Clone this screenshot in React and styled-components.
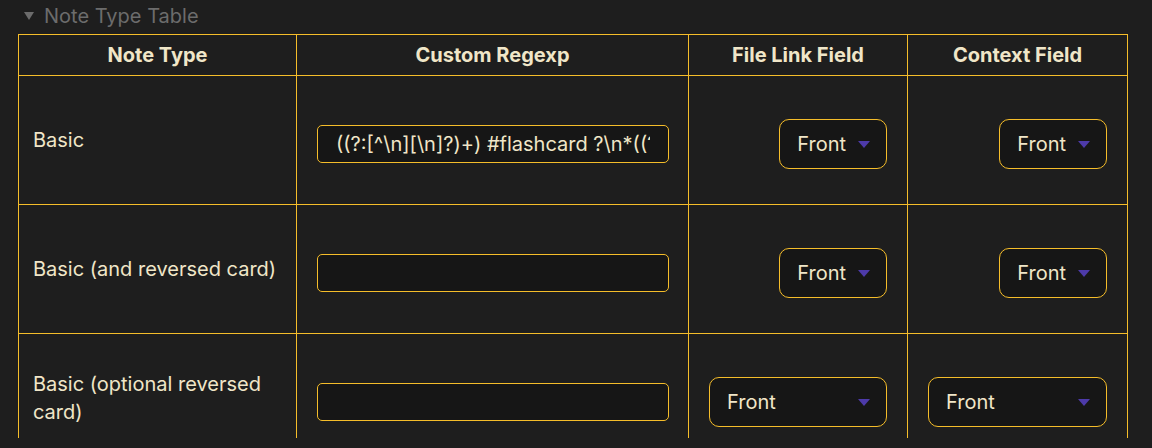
import React from "react";
import styled, { createGlobalStyle } from "styled-components";

const GOLD = "#f5bd2a";
const CREAM = "#f0e6c8";

const GlobalStyle = createGlobalStyle`
  html, body {
    margin: 0;
    padding: 0;
    background: #1e1e1e;
    font-family: Inter, "Noto Sans", sans-serif;
  }
`;

const Page = styled.div`
  padding: 4px 20px 0 18px;
  height: 448px;
  box-sizing: border-box;
`;

const Summary = styled.div`
  display: flex;
  align-items: center;
  gap: 10px;
  height: 24px;
  margin-bottom: 6px;
  padding-left: 6px;
  color: #6c6c6c;
  font-size: 20px;
`;

const Caret = styled.span`
  width: 0;
  height: 0;
  border-left: 5px solid transparent;
  border-right: 5px solid transparent;
  border-top: 8px solid #6c6c6c;
`;

const Scroller = styled.div`
  height: 404px;
  overflow: hidden;
`;

const Table = styled.table`
  width: 1109px;
  border-collapse: collapse;
  table-layout: fixed;
  color: ${CREAM};
  font-size: 20px;
`;

const Th = styled.th`
  height: 40px;
  border: 1px solid ${GOLD};
  font-weight: 700;
  text-align: center;
  padding: 0;
`;

const Td = styled.td`
  height: 128px;
  border: 1px solid ${GOLD};
  padding: ${(p) => (p.$name ? "0 2px 0 14px" : "0 20px 0 14px")};
  vertical-align: middle;
  text-align: ${(p) => p.$align || "left"};
  line-height: 28px;
`;

const TextInput = styled.input`
  box-sizing: border-box;
  display: block;
  height: 38px;
  margin: 8px 0 0 6px;
  width: calc(100% - 5px);
  padding: 0 18px;
  background: #161616;
  border: 1px solid ${GOLD};
  border-radius: 5px;
  color: ${CREAM};
  font-family: Inter, "Noto Sans", sans-serif;
  font-size: 20px;
  outline: none;
`;

const Dropdown = styled.div`
  box-sizing: border-box;
  display: inline-flex;
  align-items: center;
  justify-content: space-between;
  gap: 12px;
  height: 50px;
  margin-top: 8px;
  width: ${(p) => (p.$wide ? "calc(100% - 6px)" : "auto")};
  padding: 0 16px 0 17px;
  background: #161616;
  border: 1px solid ${GOLD};
  border-radius: 10px;
  color: ${CREAM};
  font-size: 20px;
  text-align: left;
  vertical-align: middle;
`;

const Arrow = () => (
  <svg width="12" height="7" viewBox="0 0 12 7">
    <path d="M0 0 H12 L6 7 Z" fill="#4d3aa9" />
  </svg>
);

const Select = ({ wide }) => (
  <Dropdown $wide={wide}>
    <span>Front</span>
    <Arrow />
  </Dropdown>
);

const rows = [
  { name: "Basic", regex: "((?:[^\\n][\\n]?)+) #flashcard ?\\n*((?:\\n(?:.+))+)", wide: false },
  { name: "Basic (and reversed card)", regex: "", wide: false },
  { name: "Basic (optional reversed card)", regex: "", wide: true },
];

export default function App() {
  return (
    <Page>
      <GlobalStyle />
      <Summary>
        <Caret />
        <span>Note Type Table</span>
      </Summary>
      <Scroller>
        <Table>
          <colgroup>
            <col style={{ width: 278 }} />
            <col style={{ width: 392 }} />
            <col style={{ width: 219 }} />
            <col style={{ width: 220 }} />
          </colgroup>
          <thead>
            <tr>
              <Th>Note Type</Th>
              <Th>Custom Regexp</Th>
              <Th>File Link Field</Th>
              <Th>Context Field</Th>
            </tr>
          </thead>
          <tbody>
            {rows.map((r) => (
              <tr key={r.name}>
                <Td $name>{r.name}</Td>
                <Td>
                  <TextInput defaultValue={r.regex} readOnly />
                </Td>
                <Td $align="right">
                  <Select wide={r.wide} />
                </Td>
                <Td $align="right">
                  <Select wide={r.wide} />
                </Td>
              </tr>
            ))}
          </tbody>
        </Table>
      </Scroller>
    </Page>
  );
}
